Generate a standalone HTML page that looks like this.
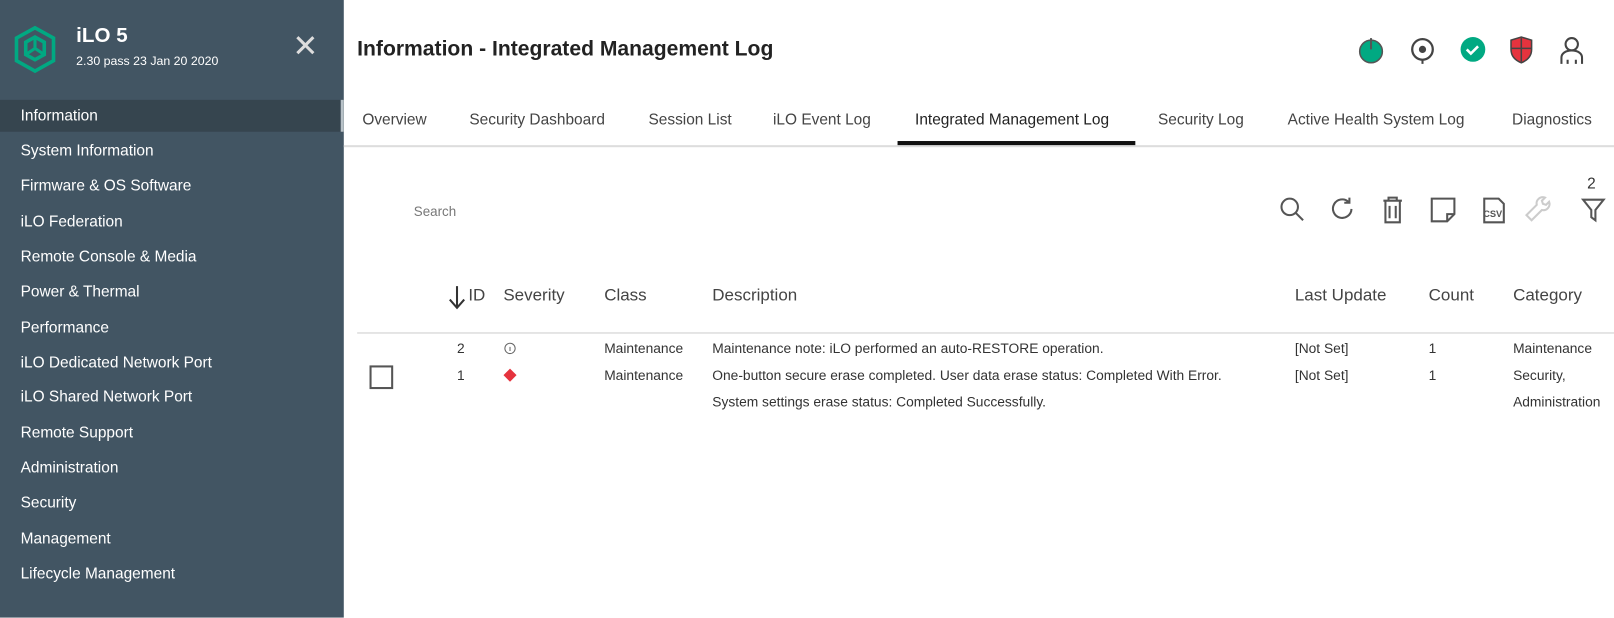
<!DOCTYPE html>
<html><head><style>
*{margin:0;padding:0;box-sizing:border-box}
body{width:1614px;height:591px;overflow:hidden;font-family:"Liberation Sans",sans-serif;background:#fff;position:relative;color:#333}
#w{position:absolute;left:0;top:0;width:1568px;height:574px;transform:scale(1.0293);transform-origin:0 0}
#sb{position:absolute;left:0;top:0;width:334px;height:600px;background:#425563}
.it{position:absolute;left:20px;font-size:15px;color:#fff;line-height:20px}
.t{position:absolute;font-size:15px;color:#444;top:108px}
.h{position:absolute;font-size:16.5px;color:#444;top:278px}
.c{position:absolute;font-size:13.4px;color:#333}
</style></head><body><div id="w">
<div id="sb">
<svg style="position:absolute;left:12px;top:24px" width="44" height="48" viewBox="0 0 44 48"><g fill="none" stroke="#01a982" stroke-width="3.5"><path d="M22 3L40 13V35L22 45L4 35V13Z"/><path d="M22 12L31 17V29L22 34L13 29V17Z"/><path d="M22 23L22 12M22 23L13 29M22 23L31 29" stroke-width="3"/></g></svg>
<div style="position:absolute;left:74px;top:24px;color:#fff;font-size:20px;font-weight:bold">iLO 5</div>
<div style="position:absolute;left:74px;top:52px;color:#fff;font-size:12px">2.30 pass 23 Jan 20 2020</div>
<div style="position:absolute;left:284px;top:28px;color:#ddd;font-size:30px;line-height:36px">✕</div>
<div style="position:absolute;left:0;top:97px;width:334px;height:31px;background:#36454f"></div>
<div style="position:absolute;left:331px;top:97px;width:3px;height:31px;background:#b8c2c8"></div>
<div class="it" style="top:103px">Information</div>
<div class="it" style="top:137px">System Information</div>
<div class="it" style="top:171px">Firmware &amp; OS Software</div>
<div class="it" style="top:206px">iLO Federation</div>
<div class="it" style="top:240px">Remote Console &amp; Media</div>
<div class="it" style="top:274px">Power &amp; Thermal</div>
<div class="it" style="top:309px">Performance</div>
<div class="it" style="top:343px">iLO Dedicated Network Port</div>
<div class="it" style="top:376px">iLO Shared Network Port</div>
<div class="it" style="top:411px">Remote Support</div>
<div class="it" style="top:445px">Administration</div>
<div class="it" style="top:479px">Security</div>
<div class="it" style="top:514px">Management</div>
<div class="it" style="top:548px">Lifecycle Management</div>
</div>
<div style="position:absolute;left:347px;top:36px;font-size:20.5px;font-weight:bold;color:#222">Information - Integrated Management Log</div>
<svg style="position:absolute;left:1318px;top:34px" width="240" height="30" viewBox="0 0 240 30">
<circle cx="14" cy="16" r="11" fill="#01a982" stroke="#555" stroke-width="1.5"/><path d="M14 3V14" stroke="#555" stroke-width="2"/>
<circle cx="64" cy="14" r="10" fill="none" stroke="#444" stroke-width="2.2"/><circle cx="64" cy="14" r="3.5" fill="#444"/><path d="M64 24v4" stroke="#444" stroke-width="2"/>
<circle cx="113" cy="14" r="12" fill="#01a982"/><path d="M107 14l4 4 7-7" stroke="#fff" stroke-width="2.5" fill="none"/>
<path d="M150 5l10-3 10 3v9c0 7-5 11-10 13-5-2-10-6-10-13z" fill="#e5333e" stroke="#444" stroke-width="1.5"/><path d="M160 3v23M150 13h20" stroke="#444" stroke-width="1.5"/>
<circle cx="209" cy="9" r="6" fill="none" stroke="#444" stroke-width="2"/><path d="M199 28v-6c0-4 4-7 10-7s10 3 10 7v6M205 24v4M213 24v4" fill="none" stroke="#444" stroke-width="2"/>
</svg>
<div class="t" style="left:352px">Overview</div>
<div class="t" style="left:456px">Security Dashboard</div>
<div class="t" style="left:630px">Session List</div>
<div class="t" style="left:751px">iLO Event Log</div>
<div class="t" style="left:889px;color:#222">Integrated Management Log</div>
<div class="t" style="left:1125px">Security Log</div>
<div class="t" style="left:1251px">Active Health System Log</div>
<div class="t" style="left:1469px">Diagnostics</div>
<div style="position:absolute;left:334px;top:141px;width:1280px;height:2px;background:#ddd"></div>
<div style="position:absolute;left:872px;top:137px;width:231px;height:4px;background:#111"></div>
<div style="position:absolute;left:402px;top:198px;font-size:13px;color:#777">Search</div>
<div style="position:absolute;left:1542px;top:170px;font-size:15px;color:#333">2</div>
<svg style="position:absolute;left:1240px;top:188px" width="330" height="32" viewBox="0 0 330 32" fill="none" stroke="#555" stroke-width="2">
<circle cx="13" cy="13" r="8"/><path d="M19 19l7 7"/>
<path d="M70 8a9 9 0 1 0 3 7M71 4v5h-5"/>
<path d="M104 7h18M109 7V4h8v3M106 7v21h14V7M110 12v12M116 12v12"/>
<path d="M151 5h22v15l-7 7h-15zM173 20h-7v7"/>
<path d="M202 5h14l5 5v18h-19z" /><text x="201" y="23" font-size="9" fill="#555" stroke="none" font-family="Liberation Sans" font-weight="bold">CSV</text>
<path d="M248 26l10-10a6 6 0 0 0 7-8l-3 3-3-1-1-3 3-3a6 6 0 0 0-8 7l-10 10z" stroke="#ccc"/>
<path d="M298 6h20l-8 10v10l-4-3v-7z"/>
</svg>
<svg style="position:absolute;left:434px;top:276px" width="22" height="26" viewBox="0 0 22 26"><path d="M10 2v21M3 15l7 8 7-8" fill="none" stroke="#333" stroke-width="2"/></svg>
<div class="h" style="left:455px">ID</div>
<div class="h" style="left:489px">Severity</div>
<div class="h" style="left:587px">Class</div>
<div class="h" style="left:692px">Description</div>
<div class="h" style="left:1258px">Last Update</div>
<div class="h" style="left:1388px">Count</div>
<div class="h" style="left:1470px">Category</div>
<div style="position:absolute;left:347px;top:323px;width:1267px;height:1px;background:#ccc"></div>
<div class="c" style="left:444px;top:331px">2</div>
<svg style="position:absolute;left:489px;top:332px" width="13" height="13"><circle cx="6.5" cy="6.5" r="5" fill="none" stroke="#666"/><path d="M6.5 5v4" stroke="#666"/></svg>
<div class="c" style="left:587px;top:331px">Maintenance</div>
<div class="c" style="left:692px;top:331px">Maintenance note: iLO performed an auto-RESTORE operation.</div>
<div class="c" style="left:1258px;top:331px">[Not Set]</div>
<div class="c" style="left:1388px;top:331px">1</div>
<div class="c" style="left:1470px;top:331px">Maintenance</div>
<div style="position:absolute;left:359px;top:355px;width:23px;height:23px;border:2px solid #555"></div>
<div class="c" style="left:444px;top:357px">1</div>
<div style="position:absolute;left:491px;top:360px;width:9px;height:9px;background:#e5333e;transform:rotate(45deg)"></div>
<div class="c" style="left:587px;top:357px">Maintenance</div>
<div class="c" style="left:692px;top:357px">One-button secure erase completed. User data erase status: Completed With Error.</div>
<div class="c" style="left:692px;top:383px">System settings erase status: Completed Successfully.</div>
<div class="c" style="left:1258px;top:357px">[Not Set]</div>
<div class="c" style="left:1388px;top:357px">1</div>
<div class="c" style="left:1470px;top:357px">Security,</div>
<div class="c" style="left:1470px;top:383px">Administration</div>
</div></body></html>
